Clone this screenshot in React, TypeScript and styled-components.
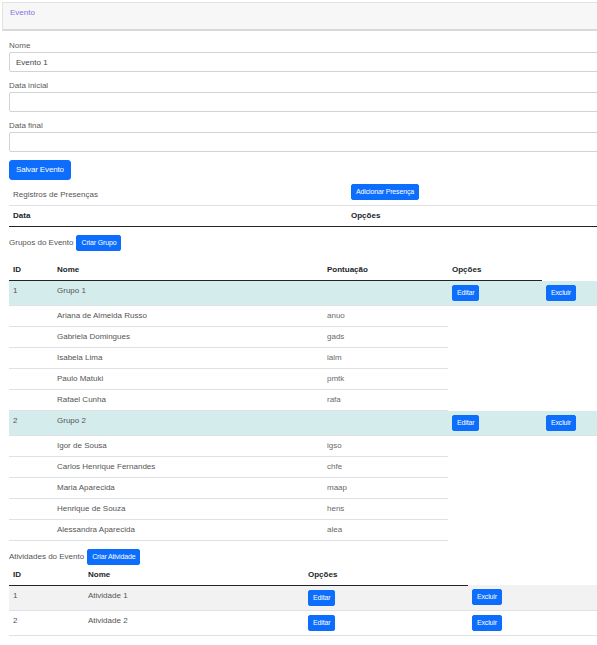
import React from "react";
import styled, { createGlobalStyle } from "styled-components";

const GlobalStyle = createGlobalStyle`
  html, body {
    margin: 0;
    padding: 0;
    overflow: hidden;
    background: #ffffff;
  }
  body {
    font-family: "Segoe UI", "Liberation Sans", Arial, sans-serif;
    font-size: 8px;
    line-height: 12px;
    color: #212529;
  }
  * { box-sizing: border-box; }
`;

const Page = styled.div`
  width: 640px;
  padding: 2px 0 0 2px;
`;

const CardHeader = styled.div`
  height: 29px;
  background: #f7f7f7;
  border: 1px solid #e4e4e4;
  border-bottom: 2px solid #d9d9d9;
  padding: 4px 0 0 7px;
`;

const HeaderLink = styled.span`
  color: #7f74e4;
  line-height: 12px;
`;

const Body = styled.div`
  padding: 9px 0 0 7px;
`;

const Field = styled.div`
  margin-bottom: 8px;
`;

const Label = styled.label`
  display: block;
  line-height: 12px;
  color: #5a5a5a;
`;

const Input = styled.input`
  display: block;
  width: 100%;
  height: 20px;
  border: 1px solid #ced4da;
  border-radius: 2px;
  padding: 0 6px;
  font-family: inherit;
  font-size: 8px;
  color: #444;
  background: #fff;
  outline: none;
`;

const Button = styled.button<{ $size?: "sm" | "md" }>`
  display: inline-block;
  background: #0d6efd;
  border: 1px solid #0d6efd;
  color: #ffffff;
  font-family: inherit;
  cursor: pointer;
  white-space: nowrap;
  letter-spacing: -0.15px;
  ${({ $size }) =>
    $size === "sm"
      ? `
    font-size: 7px;
    line-height: 10px;
    height: 16px;
    padding: 2px 4px;
    border-radius: 2px;
  `
      : `
    font-size: 8px;
    line-height: 12px;
    height: 20px;
    padding: 3px 6px;
    border-radius: 3px;
  `}
`;

const Table = styled.table`
  width: 100%;
  border-collapse: collapse;
  table-layout: fixed;
`;

const Th = styled.th`
  text-align: left;
  font-weight: 700;
  padding: 4px;
  line-height: 12px;
  color: #212529;
  border-bottom: 1px solid #212529;
`;

const Td = styled.td<{ $tone?: "info" | "stripe" | "plain"; $pt?: number }>`
  padding: ${({ $pt }) => $pt ?? 4}px 4px 4px 4px;
  vertical-align: top;
  line-height: 12px;
  color: #555555;
  border-bottom: 1px solid #dee2e6;
  background: ${({ $tone }) =>
    $tone === "info" ? "#d5ecec" : $tone === "stripe" ? "#f2f2f2" : "transparent"};
`;

const SectionTitle = styled.div<{ $mb?: number }>`
  display: flex;
  align-items: center;
  gap: 3px;
  margin-top: 8px;
  margin-bottom: ${({ $mb }) => $mb ?? 0}px;
  color: #555555;
`;

const Score = styled.span`
  color: #6a6a6a;
`;

type Group = { id: number; name: string; members: [string, string][] };

const groups: Group[] = [
  {
    id: 1,
    name: "Grupo 1",
    members: [
      ["Ariana de Almeida Russo", "anuo"],
      ["Gabriela Domingues", "gads"],
      ["Isabela Lima", "ialm"],
      ["Paulo Matuki", "pmtk"],
      ["Rafael Cunha", "rafa"],
    ],
  },
  {
    id: 2,
    name: "Grupo 2",
    members: [
      ["Igor de Sousa", "igso"],
      ["Carlos Henrique Fernandes", "chfe"],
      ["Maria Aparecida", "maap"],
      ["Henrique de Souza", "hens"],
      ["Alessandra Aparecida", "alea"],
    ],
  },
];

const activities = [
  { id: 1, name: "Atividade 1" },
  { id: 2, name: "Atividade 2" },
];

export default function App() {
  return (
    <>
      <GlobalStyle />
      <Page>
        <CardHeader>
          <HeaderLink>Evento</HeaderLink>
        </CardHeader>
        <Body>
          <Field>
            <Label>Nome</Label>
            <Input defaultValue="Evento 1" />
          </Field>
          <Field>
            <Label>Data inicial</Label>
            <Input />
          </Field>
          <Field>
            <Label>Data final</Label>
            <Input />
          </Field>
          <Button>Salvar Evento</Button>

          <Table>
            <colgroup>
              <col style={{ width: 338 }} />
              <col />
            </colgroup>
            <tbody>
              <tr>
                <Td $pt={9}>Registros de Presenças</Td>
                <Td>
                  <Button $size="sm">Adicionar Presença</Button>
                </Td>
              </tr>
              <tr>
                <Th>Data</Th>
                <Th>Opções</Th>
              </tr>
            </tbody>
          </Table>

          <SectionTitle $mb={9}>
            <span>Grupos do Evento</span>
            <Button $size="sm">Criar Grupo</Button>
          </SectionTitle>

          <Table>
            <colgroup>
              <col style={{ width: 44 }} />
              <col style={{ width: 270 }} />
              <col style={{ width: 125 }} />
              <col style={{ width: 94 }} />
              <col />
            </colgroup>
            <thead>
              <tr>
                <Th>ID</Th>
                <Th>Nome</Th>
                <Th>Pontuação</Th>
                <Th>Opções</Th>
              </tr>
            </thead>
            <tbody>
              {groups.map((g) => (
                <React.Fragment key={g.id}>
                  <tr>
                    <Td $tone="info">{g.id}</Td>
                    <Td $tone="info">{g.name}</Td>
                    <Td $tone="info" />
                    <Td $tone="info">
                      <Button $size="sm">Editar</Button>
                    </Td>
                    <Td $tone="info">
                      <Button $size="sm">Excluir</Button>
                    </Td>
                  </tr>
                  {g.members.map(([name, code]) => (
                    <tr key={code}>
                      <Td />
                      <Td>{name}</Td>
                      <Td>
                        <Score>{code}</Score>
                      </Td>
                    </tr>
                  ))}
                </React.Fragment>
              ))}
            </tbody>
          </Table>

          <SectionTitle>
            <span>Atividades do Evento</span>
            <Button $size="sm">Criar Atividade</Button>
          </SectionTitle>

          <Table>
            <colgroup>
              <col style={{ width: 75 }} />
              <col style={{ width: 220 }} />
              <col style={{ width: 164 }} />
              <col />
            </colgroup>
            <thead>
              <tr>
                <Th>ID</Th>
                <Th>Nome</Th>
                <Th>Opções</Th>
              </tr>
            </thead>
            <tbody>
              {activities.map((a, i) => {
                const tone = i % 2 === 0 ? "stripe" : "plain";
                return (
                  <tr key={a.id}>
                    <Td $tone={tone}>{a.id}</Td>
                    <Td $tone={tone}>{a.name}</Td>
                    <Td $tone={tone}>
                      <Button $size="sm">Editar</Button>
                    </Td>
                    <Td $tone={tone}>
                      <Button $size="sm">Excluir</Button>
                    </Td>
                  </tr>
                );
              })}
            </tbody>
          </Table>
        </Body>
      </Page>
    </>
  );
}
